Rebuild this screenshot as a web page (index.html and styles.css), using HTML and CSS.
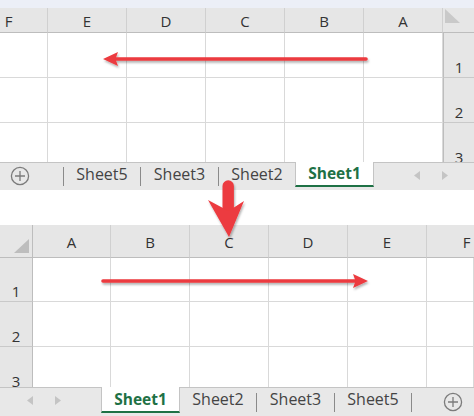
FILE: index.html
```html
<!DOCTYPE html>
<html>
<head>
<meta charset="utf-8">
<link rel="stylesheet" href="styles.css">
</head>
<body>
<div class="page">
  <div class="top-strip"></div>
  <section class="sheet">
    <div class="grid grid-top">
      <div class="hd clip"><span>F</span></div>
      <div class="hd">E</div>
      <div class="hd">D</div>
      <div class="hd">C</div>
      <div class="hd">B</div>
      <div class="hd">A</div>
      <div class="hd corner corner-r"><svg width="15" height="14"><polygon points="0,0 0,14 15,14" fill="#c9c9c9"/></svg></div>

      <div class="c"></div><div class="c"></div><div class="c"></div><div class="c"></div><div class="c"></div><div class="c"></div><div class="rn rn-r">1</div>
      <div class="c"></div><div class="c"></div><div class="c"></div><div class="c"></div><div class="c"></div><div class="c"></div><div class="rn rn-r">2</div>
      <div class="c"></div><div class="c"></div><div class="c"></div><div class="c"></div><div class="c"></div><div class="c"></div><div class="rn rn-r">3</div>
    </div>
    <div class="tabbar">
      <div class="plus plus-top"><svg width="20" height="20" viewBox="0 0 20 20"><circle cx="10" cy="10" r="8.6" fill="none" stroke="#7b7b7b" stroke-width="1.3"/><path d="M10 5v10M5 10h10" stroke="#7b7b7b" stroke-width="1.3"/></svg></div>
      <i class="sep"></i>
      <div class="tab w76">Sheet5</div>
      <i class="sep"></i>
      <div class="tab w77">Sheet3</div>
      <i class="sep"></i>
      <div class="tab w76">Sheet2</div>
      <div class="tab active">Sheet1</div>
      <div class="nav nav-top">
        <svg width="6" height="9"><polygon points="6,0 6,9 0,4.5" fill="#c4c4c4"/></svg>
        <svg width="6" height="9"><polygon points="0,0 0,9 6,4.5" fill="#c4c4c4"/></svg>
      </div>
    </div>
  </section>

  <div class="gap"></div>

  <section class="sheet">
    <div class="grid grid-bottom">
      <div class="hd corner corner-l"><svg width="15" height="14"><polygon points="15,0 15,14 0,14" fill="#bdbdbd"/></svg></div>
      <div class="hd">A</div>
      <div class="hd">B</div>
      <div class="hd">C</div>
      <div class="hd">D</div>
      <div class="hd">E</div>
      <div class="hd clip-r"><span>F</span></div>

      <div class="rn rn-l">1</div><div class="c"></div><div class="c"></div><div class="c"></div><div class="c"></div><div class="c"></div><div class="c"></div>
      <div class="rn rn-l">2</div><div class="c"></div><div class="c"></div><div class="c"></div><div class="c"></div><div class="c"></div><div class="c"></div>
      <div class="rn rn-l">3</div><div class="c"></div><div class="c"></div><div class="c"></div><div class="c"></div><div class="c"></div><div class="c"></div>
    </div>
    <div class="tabbar tabbar-bottom">
      <div class="nav nav-bottom">
        <svg width="6" height="9"><polygon points="6,0 6,9 0,4.5" fill="#c4c4c4"/></svg>
        <svg width="6" height="9"><polygon points="0,0 0,9 6,4.5" fill="#c4c4c4"/></svg>
      </div>
      <div class="tab active">Sheet1</div>
      <div class="tab w76">Sheet2</div>
      <i class="sep"></i>
      <div class="tab w77">Sheet3</div>
      <i class="sep"></i>
      <div class="tab w76">Sheet5</div>
      <i class="sep"></i>
      <div class="plus plus-bottom"><svg width="20" height="20" viewBox="0 0 20 20"><circle cx="10" cy="10" r="8.6" fill="none" stroke="#7b7b7b" stroke-width="1.3"/><path d="M10 5v10M5 10h10" stroke="#7b7b7b" stroke-width="1.3"/></svg></div>
    </div>
  </section>

  <svg class="arrows" width="474" height="416" viewBox="0 0 474 416">
    <defs>
      <filter id="sh" x="-20%" y="-50%" width="140%" height="200%">
        <feDropShadow dx="1" dy="2" stdDeviation="1.3" flood-color="#000" flood-opacity="0.3"/>
      </filter>
    </defs>
    <g filter="url(#sh)" fill="#ec3b3f">
      <path d="M115 59 H366" stroke="#ec3b3f" stroke-width="3.6" stroke-linecap="round"/>
      <polygon points="103,59 118,52 115.5,59 118,66"/>
      <path d="M103 281 H356" stroke="#ec3b3f" stroke-width="3.6" stroke-linecap="round"/>
      <polygon points="368,281 353,274 355.5,281 353,288"/>
      <path d="M222.5 212 V186 a5.7 5.7 0 0 1 11.4 0 V212 Z"/>
      <polygon points="208,200 228.5,211 244,201 229,237"/>
    </g>
  </svg>
</div>
</body>
</html>
```

FILE: styles.css
```css
* { box-sizing: border-box; }
html, body { margin: 0; padding: 0; background: #fff; }
body { font-family: "Open Sans", "DejaVu Sans", sans-serif; color: #333; }

.page {
  position: relative;
  width: 474px;
  height: 416px;
  overflow: hidden;
  display: flex;
  flex-direction: column;
}

.top-strip { height: 8px; background: #eceff7; }
.gap { height: 35px; background: #fff; }

.grid {
  display: grid;
  overflow: hidden;
}
.grid-top {
  height: 154px;
  grid-template-columns: 48px repeat(5, 79px) 31px;
  grid-template-rows: 25px 45px 45px 45px;
}
.grid-bottom {
  height: 162px;
  grid-template-columns: 33px 78px repeat(4, 79px) 47px;
  grid-template-rows: 33px 44px 45px 45px;
}

.hd {
  background: #e6e6e6;
  border-bottom: 1px solid #bdbdbd;
  border-right: 1px solid #d0d0d0;
  display: flex;
  align-items: center;
  justify-content: center;
  font-size: 15px;
  color: #333;
  padding-top: 2px;
  overflow: hidden;
}
.grid-top .hd { padding-top: 1px; }
.clip { justify-content: flex-start; }
.clip span { display: block; flex: none; width: 79px; margin-left: -31px; text-align: center; }
.clip-r { justify-content: flex-start; border-right: none; }
.clip-r span { display: block; flex: none; width: 79px; text-align: center; }

.corner { padding: 0; }
.corner-r { border-right: none; align-items: flex-start; justify-content: flex-start; padding: 9px 0 0 2px; }
.corner-l { border-right: 1px solid #bdbdbd; align-items: flex-end; justify-content: flex-end; padding: 0 3px 4px 0; }

.c {
  border-right: 1px solid #d9d9d9;
  border-bottom: 1px solid #d9d9d9;
  background: #fff;
}

.rn {
  background: #e6e6e6;
  border-bottom: 1px solid #c9c9c9;
  display: flex;
  align-items: flex-end;
  justify-content: center;
  font-size: 15px;
  line-height: 20px;
  color: #333;
}
.rn-r { border-left: 1px solid #bdbdbd; }
.rn-l { border-right: 1px solid #bdbdbd; }

.tabbar {
  height: 28px;
  background: #e8e8e8;
  border-top: 1px solid #c4c4c4;
  padding-bottom: 3px;
  display: flex;
  align-items: stretch;
}
.tabbar-bottom { height: 29px; }

.tab {
  display: flex;
  align-items: center;
  justify-content: center;
  font-size: 16px;
  color: #444;
  padding-bottom: 3px;
  flex: none;
}
.w76 { width: 76px; }
.w77 { width: 77px; }
.tab.active {
  width: 79px;
  background: #fff;
  color: #1e7145;
  font-weight: 700;
  font-size: 15.5px;
  border-left: 1px solid #c4c4c4;
  border-right: 1px solid #c4c4c4;
  border-bottom: 2px solid #1e7145;
  margin-top: -1px;
  padding-bottom: 1px;
}

.sep {
  flex: none;
  width: 1px;
  height: 19px;
  align-self: center;
  margin-bottom: -3px;
  background: #8a8a8a;
}

.plus { display: flex; align-items: center; flex: none; }
.plus-top { width: 63px; padding-left: 10px; margin-top: 2px; }
.plus-bottom { flex: 1; padding-left: 31px; margin-top: 2px; }

.nav { display: flex; align-items: center; gap: 22px; }
.nav-top { flex: 1; padding-left: 40px; }
.nav-bottom { width: 101px; flex: none; padding-left: 27px; }

.arrows { position: absolute; left: 0; top: 0; pointer-events: none; }
```
